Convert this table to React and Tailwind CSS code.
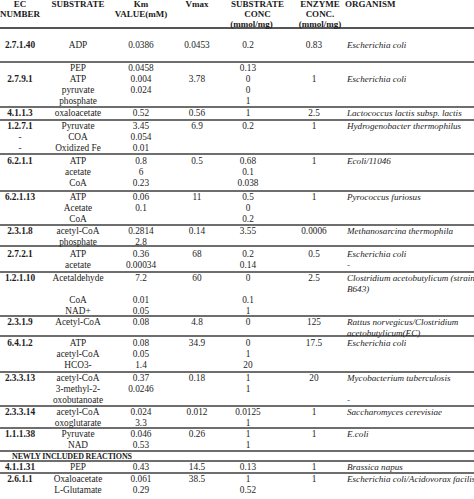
import React from "react";

const cols = "grid grid-cols-[40px_76px_50px_62px_53px_66px_1fr]";

const rows = [
  { cls: "h-[34px] pt-[11px]", ec: ["2.7.1.40"], sub: ["ADP"], km: ["0.0386"], vmax: ["0.0453"], sc: ["0.2"], enz: ["0.83"], org: ["Escherichia coli"] },
  { cls: "h-[45px] pt-[0px]", ec: ["", "2.7.9.1"], sub: ["PEP", "ATP", "pyruvate", "phosphate"], km: ["0.0458", "0.004", "0.024"], vmax: ["", "3.78"], sc: ["0.13", "0", "0", "1"], enz: ["", "1"], org: ["", "Escherichia coli"] },
  { cls: "h-[13px] pt-[0px]", ec: ["4.1.1.3"], sub: ["oxaloacetate"], km: ["0.52"], vmax: ["0.56"], sc: ["1"], enz: ["2.5"], org: ["Lactococcus lactis subsp. lactis"] },
  { cls: "h-[34px] pt-[0px]", ec: ["1.2.7.1", "-", "-"], sub: ["Pyruvate", "COA", "Oxidized Fe"], km: ["3.45", "0.054", "0.01"], vmax: ["6.9"], sc: ["0.2"], enz: ["1"], org: ["Hydrogenobacter thermophilus"] },
  { cls: "h-[37px] pt-[1px]", ec: ["6.2.1.1"], sub: ["ATP", "acetate", "CoA"], km: ["0.8", "6", "0.23"], vmax: ["0.5"], sc: ["0.68", "0.1", "0.038"], enz: ["1"], org: ["Ecoli/11046"] },
  { cls: "h-[34px] pt-[0px]", ec: ["6.2.1.13"], sub: ["ATP", "Acetate", "CoA"], km: ["0.06", "0.1"], vmax: ["11"], sc: ["0.5", "0", "0.2"], enz: ["1"], org: ["Pyrococcus furiosus"] },
  { cls: "h-[21px] pt-[0px]", ec: ["2.3.1.8"], sub: ["acetyl-CoA", "phosphate"], km: ["0.2814", "2.8"], vmax: ["0.14"], sc: ["3.55"], enz: ["0.0006"], org: ["Methanosarcina thermophila"] },
  { cls: "h-[26px] pt-[2px]", ec: ["2.7.2.1"], sub: ["ATP", "acetate"], km: ["0.36", "0.00034"], vmax: ["68"], sc: ["0.2", "0.14"], enz: ["0.5"], org: ["Escherichia coli", "-"] },
  { cls: "h-[44px] pt-[0px]", ec: ["1.2.1.10"], sub: ["Acetaldehyde", "", "CoA", "NAD+"], km: ["7.2", "", "0.01", "0.05"], vmax: ["60"], sc: ["0", "", "0.1", "1"], enz: ["2.5"], org: ["Clostridium acetobutylicum (strain", "B643)"] },
  { cls: "h-[20px] pt-[0px]", ec: ["2.3.1.9"], sub: ["Acetyl-CoA"], km: ["0.08"], vmax: ["4.8"], sc: ["0"], enz: ["125"], org: ["Rattus norvegicus/Clostridium", "acetobutylicum(EC)"] },
  { cls: "h-[36px] pt-[1px]", ec: ["6.4.1.2"], sub: ["ATP", "acetyl-CoA", "HCO3-"], km: ["0.08", "0.05", "1.4"], vmax: ["34.9"], sc: ["0", "1", "20"], enz: ["17.5"], org: ["Escherichia coli"] },
  { cls: "h-[34px] pt-[0px]", ec: ["2.3.3.13"], sub: ["acetyl-CoA", "3-methyl-2-", "oxobutanoate"], km: ["0.37", "0.0246"], vmax: ["0.18"], sc: ["1", "1"], enz: ["20"], org: ["Mycobacterium tuberculosis", "", "-"] },
  { cls: "h-[22px] pt-[0px]", ec: ["2.3.3.14"], sub: ["acetyl-CoA", "oxoglutarate"], km: ["0.024", "3.3"], vmax: ["0.012"], sc: ["0.0125", "1"], enz: ["1"], org: ["Saccharomyces cerevisiae"] },
  { cls: "h-[23px] pt-[0px]", ec: ["1.1.1.38"], sub: ["Pyruvate", "NAD"], km: ["0.046", "0.53"], vmax: ["0.26"], sc: ["1", "1"], enz: ["1"], org: ["E.coli"] },
  { section: "NEWLY INCLUDED REACTIONS" },
  { cls: "h-[12px] pt-[0px]", ec: ["4.1.1.31"], sub: ["PEP"], km: ["0.43"], vmax: ["14.5"], sc: ["0.13"], enz: ["1"], org: ["Brassica napus"] },
  { cls: "h-[40px] pt-[0px]", ec: ["2.6.1.1"], sub: ["Oxaloacetate", "L-Glutamate"], km: ["0.061", "0.29"], vmax: ["38.5"], sc: ["1", "0.52"], enz: ["1"], org: ["Escherichia coli/Acidovorax facilis"], last: true },
];

const Lines = ({ items, className = "" }) => (
  <div className={`flex flex-col ${className}`}>
    {items.map((t, i) => (
      <span
        key={i}
        className={`h-[11px] leading-[11px] whitespace-nowrap ${t === "-" ? "text-[#3b5278]" : ""}`}
      >
        {t || "\u00a0"}
      </span>
    ))}
  </div>
);

const Header = () => (
  <div className="h-[30px] border-b-2 border-[#555] box-border overflow-visible">
    <div className={`${cols} -mt-[1.5px] font-bold text-[9px] leading-[10px] text-[#1a1a1a]`}>
      <div className="flex flex-col items-center"><span>EC</span><span>NUMBER</span></div>
      <div className="flex flex-col items-center"><span>SUBSTRATE</span></div>
      <div className="flex flex-col items-center"><span>Km</span><span className="whitespace-nowrap">VALUE(mM)</span></div>
      <div className="flex flex-col items-center"><span>Vmax</span></div>
      <div className="flex flex-col items-center pl-[6px]"><span>SUBSTRATE</span><span>CONC</span><span className="-ml-[12px]">(mmol/mg)</span></div>
      <div className="flex flex-col items-center pl-[12px]"><span>ENZYME</span><span>CONC.</span><span>(mmol/mg)</span></div>
      <div className="flex flex-col items-start -ml-[2px]"><span>ORGANISM</span></div>
    </div>
  </div>
);

const Row = ({ r }) => {
  if (r.section) {
    return (
      <div className="h-[11px] border-b-2 border-[#6e6e6e] box-border">
        <div className="pl-[12px] font-bold text-[8px] tracking-[-0.15px] leading-[11px] -mt-[0.5px] whitespace-nowrap">
          {r.section}
        </div>
      </div>
    );
  }
  return (
    <div className={`${cols} ${r.cls} box-border ${r.last ? "" : "border-b-2 border-[#6e6e6e]"}`}>
      <Lines items={r.ec} className="items-center font-bold" />
      <Lines items={r.sub} className="items-center" />
      <Lines items={r.km} className="items-center" />
      <Lines items={r.vmax} className="items-center" />
      <Lines items={r.sc} className="items-center pr-[13px]" />
      <Lines items={r.enz} className="items-center" />
      <Lines items={r.org} className="items-start italic text-[9.1px]" />
    </div>
  );
};

export default function App() {
  return (
    <div className="w-[474px] h-[499px] overflow-hidden bg-white text-[#1c1c1c] text-[9.3px] font-['Liberation_Serif','Times_New_Roman',serif]">
      <Header />
      {rows.map((r, i) => (
        <Row key={i} r={r} />
      ))}
    </div>
  );
}
